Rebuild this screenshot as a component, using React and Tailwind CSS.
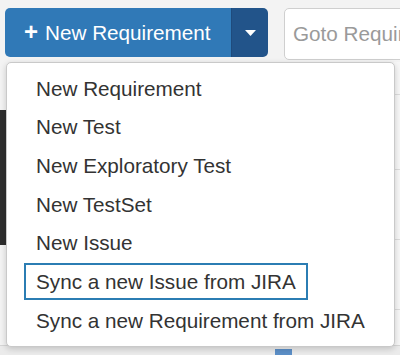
import React from "react";

const items = [
  "New Requirement",
  "New Test",
  "New Exploratory Test",
  "New TestSet",
  "New Issue",
  "Sync a new Issue from JIRA",
  "Sync a new Requirement from JIRA",
];

export default function App() {
  return (
    <div
      className="relative w-[400px] h-[355px] overflow-hidden bg-[#f3f3f3]"
      style={{ fontFamily: '"Liberation Sans", Arial, sans-serif' }}
    >
      {/* toolbar */}
      <div className="flex items-start pt-[8px] pl-[5px] gap-[16px] w-[600px]">
        <div className="flex shrink-0 h-[49px] rounded-[5px] overflow-hidden">
          <div className="flex items-center gap-[7px] bg-[#3079b7] text-white pl-[19px] pr-[19px] text-[20.7px] whitespace-nowrap w-[226px]">
            <span className="font-bold text-[24px] leading-none -mt-[2px]">+</span>
            <span>New Requirement</span>
          </div>
          <div className="flex items-center justify-center w-[37px] bg-[#22548a] border-l border-[#1e4b7d]">
            <svg width="11" height="6" viewBox="0 0 11 6">
              <path d="M0 0 L11 0 L5.5 6 Z" fill="#fff" />
            </svg>
          </div>
        </div>
        <div className="flex shrink-0 items-center h-[52px] w-[200px] bg-white border border-[#cfcfcf] rounded-[5px] pl-[8px] text-[20.7px] text-[#9a9a9a] whitespace-nowrap overflow-hidden">
          Goto Requirement
        </div>
      </div>

      {/* background content behind menu */}
      <div className="absolute left-0 top-[110px] w-[6px] h-[135px] bg-[#2e2e2e]" />
      <div className="absolute left-[394px] top-[62px] w-[6px] h-[293px] flex flex-col bg-[#f7f7f7]">
        <div className="h-[33px] border-b border-[#dcdcdc]" />
        <div className="h-[75px] border-b border-[#dcdcdc]" />
        <div className="h-[70px] border-b border-[#dcdcdc]" />
        <div className="h-[70px] border-b border-[#dcdcdc]" />
      </div>
      <div className="absolute left-0 top-[345px] w-[400px] h-[10px] bg-[#ebebeb] border-t border-[#d6d6d6]" />
      <div className="absolute left-[275px] top-[349px] w-[17px] h-[6px] bg-[#5c8fc7]" />

      {/* dropdown menu */}
      <div className="absolute left-[6px] top-[62px] w-[389px] h-[285px] bg-white border border-[#c9c9c9] rounded-[5px] shadow-[0_2px_6px_rgba(0,0,0,0.18)] pt-[6px]">
        {items.map((t, i) => (
          <div key={t} className="h-[38.67px] flex items-center pl-[17px]">
            <span
              className={
                "inline-flex items-center h-[37px] px-[10px] border-2 text-[20.7px] text-[#333] whitespace-nowrap " +
                (i === 5 ? "border-[#2b7db3]" : "border-transparent")
              }
            >
              {t}
            </span>
          </div>
        ))}
      </div>
    </div>
  );
}
